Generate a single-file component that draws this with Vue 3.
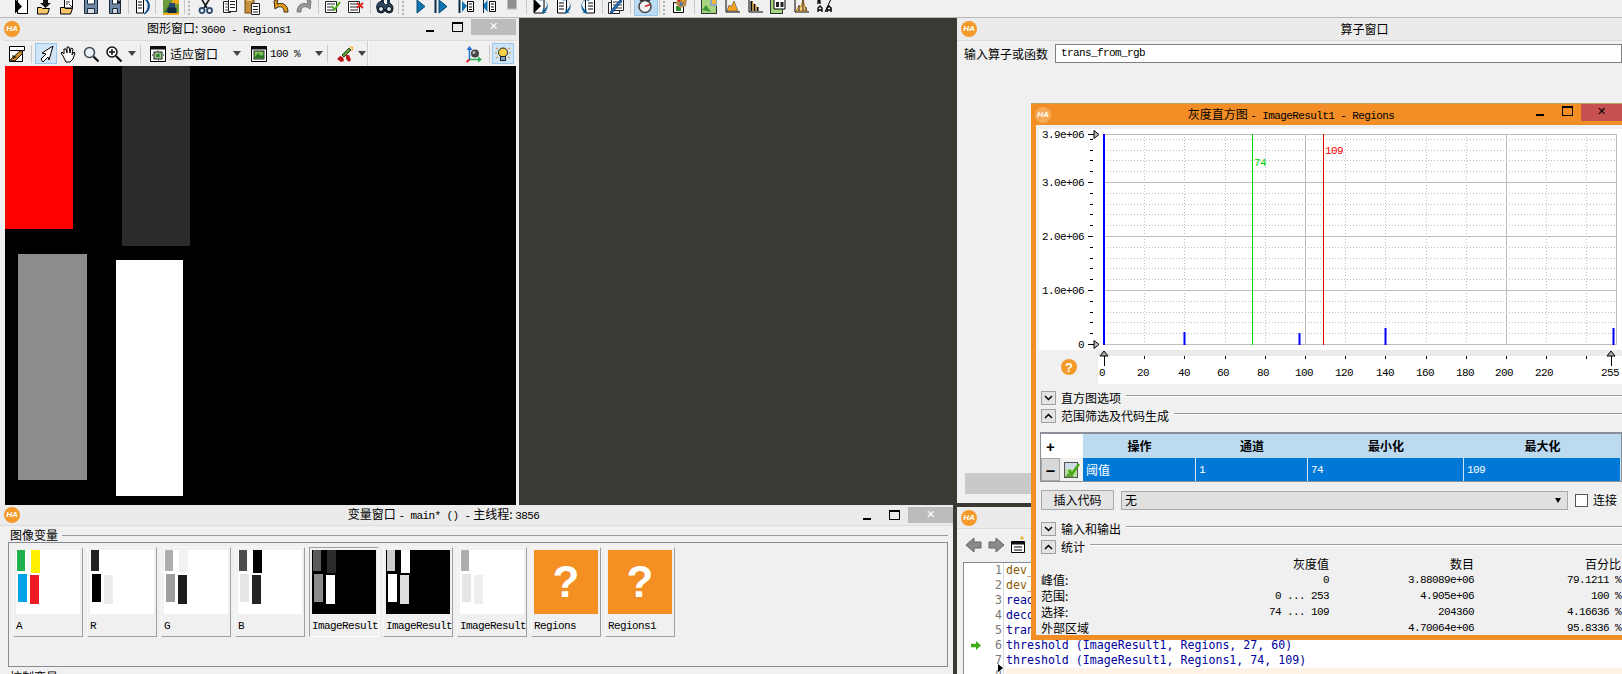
<script setup>
const icons = {
  doc: '<path d="M3.5 -1h10v14.500h-10z" fill="#fff" stroke="#000"/><path d="M1 -1l7 7.500-7 7z" fill="#000"/>',
  open: '<path d="M1.500 7.500h4l1 1h7l-2 5.500h-10z" fill="#f6c66c" stroke="#000"/><path d="M7 0h5v3h3l-5.500 5-5.500-5h3z" fill="#111"/>',
  openx: '<path d="M1.500 7.500h4l1 1h7l-2 5.500h-10z" fill="#f6c66c" stroke="#000"/><path d="M5.500 -1h8v9h-8z" fill="#fff" stroke="#000"/><path d="M7 2h4M7 4h2M10 4l3 3" stroke="#333"/>',
  save: '<path d="M1.500 -1h12l1 1v13.500h-13z" fill="#6f8aa8" stroke="#1c2a38"/><path d="M4.500 -1h7v5h-7z" fill="#fff" stroke="#1c2a38"/><path d="M4.500 8.500h7v5h-7z" fill="#d9dfe5" stroke="#1c2a38"/>',
  saveall: '<path d="M2.500 -1h11v14.500h-11z" fill="#6f8aa8" stroke="#1c2a38"/><path d="M5.500 -1h5v5h-5z" fill="#fff" stroke="#1c2a38"/><path d="M5.500 8.500h5v5h-5z" fill="#cfd6dd" stroke="#1c2a38"/><path d="M12 1v3M10.500 2.500h3" stroke="#000"/>',
  saveas: '<path d="M2.500 -1h7v14h-7z" fill="#fff" stroke="#000"/><path d="M4 2h4M4 5h4M4 8h4" stroke="#000"/><path d="M10 -1c5 2 6 10 0 15l2-1c5-4 4-11 0-14z" fill="#0d4f8c" stroke="#0d4f8c"/>',
  prog: '<rect x="0" y="-1" width="16" height="14" fill="#6f9a3c"/><rect x="9" y="-1" width="7" height="5" fill="#f0a81c"/><path d="M1 12l5-7 4 7z" fill="#2e6b3a"/><rect x="6" y="3" width="6" height="5" fill="#2a4a6a"/><path d="M5 13v-5h8v5zM7 13v2M11 13v2" fill="#10283c" stroke="#10283c"/><rect x="0" y="13" width="16" height="2" fill="#f0a81c"/>',
  cut: '<path d="M3 -2l6 10M12 -2l-6 10" stroke="#111" stroke-width="1.600" fill="none"/><circle cx="4" cy="10.500" r="2.500" fill="#fff" stroke="#2c4a6e" stroke-width="1.800"/><circle cx="11.500" cy="10.500" r="2.500" fill="#fff" stroke="#2c4a6e" stroke-width="1.800"/>',
  copy: '<path d="M1.500 1.500h7v11h-7z" fill="#fff" stroke="#222"/><path d="M6.500 -1.500h8v13h-8z" fill="#fff" stroke="#222"/><path d="M8 1.500h5M8 4.500h5M8 7.500h5" stroke="#222"/><path d="M3 4h3M3 7h3M3 10h3" stroke="#555"/>',
  paste: '<rect x="1" y="-1" width="9" height="14" fill="#c5913f" stroke="#6b4a17"/><rect x="3" y="-2" width="5" height="3" fill="#e9c88a"/><path d="M7.500 3.500h8v11h-8z" fill="#fff" stroke="#222"/><path d="M9 6.500h5M9 9.500h5M9 12h5" stroke="#222"/>',
  undo: '<path d="M1 1l1 8 3-2c4-1 6 1 6 5h4c0-7-5-10-11-8L5-1z" fill="#e59a1e" stroke="#3a2a10"/>',
  redo: '<path d="M15 1l-1 8-3-2c-4-1-6 1-6 5H1c0-7 5-10 11-8l-1-5z" fill="#999" stroke="#7a7a7a"/>',
  check: '<path d="M.500 1.500h11v11h-11z" fill="#fff" stroke="#222"/><path d="M2 4h8M2 7h6M2 10h8" stroke="#222"/><path d="M7 6l2.500 3.500L15 2" fill="none" stroke="#4aae1e" stroke-width="2"/>',
  xcheck: '<path d="M.500 1.500h11v11h-11z" fill="#fff" stroke="#222"/><path d="M2 4h8M2 7h8M2 10h8" stroke="#222"/><path d="M9 3l6 5M15 3L9 8" stroke="#e1261c" stroke-width="2"/>',
  binoc: '<path d="M4 -1h3v4H4zM10 -1h3v4h-3z" fill="#1f3550"/><path d="M0 9a4 5 0 0 1 8-4h1a4 5 0 0 1 7 4 4 4 0 0 1-8 0 4 4 0 0 1-8 0z" fill="#2c4866" stroke="#0c1a28"/><circle cx="4" cy="9" r="2.500" fill="#dfe7ef" stroke="#000"/><circle cx="12" cy="9" r="2.500" fill="#dfe7ef" stroke="#000"/>',
  play: '<path d="M1 0l8 6.500-8 6.500z" fill="#0d72b0" stroke="#0a4a70"/>',
  play2: '<path d="M1.500 -1v14" stroke="#0a2a48" stroke-width="2"/><path d="M5 0l8 6.500-8 6.500z" fill="#0d72b0" stroke="#0a4a70"/>',
  step: '<path d="M1.500 -1v14" stroke="#0a2a48" stroke-width="2"/><path d="M4 1l5 5-5 6z" fill="#0d72b0"/><path d="M9.500 1.500h6v10h-6z" fill="#fff" stroke="#000"/><path d="M11 4h3M11 7h3M11 9.500h3" stroke="#000"/>',
  stepb: '<path d="M.5 6l5-6v12z" fill="#0d72b0"/><path d="M7.500 1.500h6v10h-6z" fill="#fff" stroke="#000"/><path d="M9 4h3M9 7h3M9 9.500h3" stroke="#000"/><path d="M1.500 -1v14" stroke="#0a2a48"/>',
  stop: '<rect x=".5" y="-1" width="9" height="10" fill="#8f8f8f" stroke="#bcbcbc"/>',
  ret1: '<path d="M1 -1h10v14H1z" fill="#fff" stroke="#000"/><path d="M1 -1l7 7-7 7z" fill="#000"/><path d="M7 1c6-3 10 4 4 9l-1-2 -1 5h5l-2-1c6-6 1-15-6-11z" fill="#0d5f9c"/>',
  ret2: '<path d="M1.500 -1h9v14h-9z" fill="#fff" stroke="#000"/><path d="M3 3h5M3 6h5M3 9h5" stroke="#000"/><path d="M7 1c6-3 10 4 4 9l-1-2-1 5h5l-2-1c6-6 1-15-6-11z" fill="#0d5f9c"/>',
  ret3: '<path d="M5.500 -1h9v14h-9z" fill="#fff" stroke="#000"/><path d="M8 3h5M8 6h5M8 9h5" stroke="#000"/><path d="M9 1C3-2-1 5 5 10l1-2 1 5H2l2-1C-2 6 3-3 10-1z" fill="#0d5f9c"/>',
  edit: '<path d="M.5 2.500h11v11h-11z" fill="#fff" stroke="#222"/><path d="M3.500 -.5h12v11h-12z" fill="#fff" stroke="#222"/><path d="M5 2h9M5 5h9M5 8h9" stroke="#333"/><path d="M2 12L12 0l2 1L4 13z" fill="#2a73c7" stroke="#174a85"/>',
  clock: '<circle cx="8" cy="6.500" r="6" fill="#f3f3f3" stroke="#444" stroke-width="1.500"/><path d="M8 6.500l5-2" stroke="#d9261c" stroke-width="1.500"/><path d="M3 0l3 1M13 0l-3 1" stroke="#333" stroke-width="2"/>',
  pal: '<path d="M1.500 2.500h10v10h-10z" fill="#fff" stroke="#000"/><rect x="4" y="6" width="5" height="5" fill="#2f8f2f"/><path d="M3 3l5-5 7 1-1 7-6 2z" fill="#b38b4a"/><circle cx="7" cy="0" r="1.500" fill="#d82020"/><circle cx="11" cy="0" r="1.500" fill="#e8a814"/><circle cx="9" cy="4" r="1.500" fill="#2a6fc4"/>',
  img1: '<rect x=".5" y="-1" width="15" height="14.500" fill="#a5d57e" stroke="#333"/><path d="M9 -1h7v7h-7z" fill="#8fa8c4"/><rect x="11" y="0" width="4" height="4" fill="#f2b53a"/><path d="M1 10l4-5 5 7z" fill="#3c9a3a"/>',
  hist1: '<path d="M1 -1v13h14" fill="none" stroke="#000"/><path d="M2 11l2-6 2 2 3-6 2 5 2 5z" fill="#f7a11c" stroke="#333" stroke-width=".5"/>',
  hist2: '<path d="M1 -1v13h14" fill="none" stroke="#000"/><path d="M3.500 11V1M6.500 11V4M9.500 11V7" stroke="#000" stroke-width="2"/><path d="M5 11V2M8 11V5" stroke="#f7a11c" stroke-width="1"/>',
  img2: '<rect x=".5" y="-1" width="12" height="14.500" fill="#a5d57e" stroke="#333"/><path d="M4 -1h11v10h-11z" fill="#fff" stroke="#000"/><path d="M6 2h3v5h-3zM10.500 2h3v5h-3z" fill="#222"/>',
  hist3: '<path d="M1 -1v13h14" fill="none" stroke="#000"/><path d="M2 11l3-5 2 1 2-7 2 7 2 4z" fill="#f7cf7c" stroke="#c17c10"/><path d="M5 11V5M9 11V0M12 11V7" stroke="#222"/>',
  aa: '<path d="M1 4V1l1-2 1 2v3M1 2h2M1 12V8l2-2 2 2v4M1 10h4" stroke="#000" fill="none" stroke-width="1.300"/><path d="M8 12l6-13" stroke="#000"/><path d="M10 12V8l2-2 2 2v4M10 10h4" stroke="#000" fill="none" stroke-width="1.500"/>',
  pen: '<path d="M.5 .5h15v4h-15z" fill="#fff" stroke="#000"/><path d="M.5 4.500h13v11h-13z" fill="#fff" stroke="#000"/><path d="M1 14L11 5l3 2-8 8z" fill="#c88a2a" stroke="#2a1a06"/><path d="M3 9l5 2-4 2z" fill="#3a2a10"/>',
  arrow: '<path d="M15 0L4 7l4 1-5 5 2 3 5-5 1 3z" fill="#fff" stroke="#000"/>',
  hand: '<path d="M3 10L1 7l1-1 2 2 0-5 2 0 1 4 0-6 2 0 1 6 1-5 2 1-1 6 2-3 1 1-2 6-3 3H6z" fill="#fff" stroke="#000"/>',
  mag: '<circle cx="6.500" cy="6.500" r="5" fill="#eef3f8" stroke="#3c4a55" stroke-width="1.500"/><path d="M10.500 10.500l5 5" stroke="#111" stroke-width="2.200"/>',
  zoomp: '<circle cx="6" cy="6" r="5" fill="#fff" stroke="#111" stroke-width="1.500"/><path d="M3 6h6M6 3v6" stroke="#111" stroke-width="1.500"/><path d="M10 10l5.500 5.500" stroke="#111" stroke-width="2.200"/>',
  fit: '<path d="M.5 .5h15v15h-15z" fill="#fff" stroke="#000"/><path d="M.5 .5h15v3h-15z" fill="#111"/><rect x="4" y="6" width="8" height="7" fill="#9ac38a" stroke="#222"/><rect x="6.500" y="8" width="3" height="3" fill="#2a7a2a"/><path d="M2 9h1M13 9h1M8 4.500v1M8 14h1" stroke="#000"/>',
  fitimg: '<path d="M.5 .5h15v15h-15z" fill="#fff" stroke="#000"/><path d="M.5 .5h15v3h-15z" fill="#111"/><rect x="3" y="5" width="10" height="8" fill="#7fc455" stroke="#222"/><path d="M3 12l4-5 3 3 3-2v4z" fill="#2a7a2a"/>',
  color: '<path d="M5 9L12 2l2 2-7 7z" fill="#5d9a3a" stroke="#2d4a1a"/><path d="M13 0l1 2 2-1-1 2 1 1-2 0" stroke="#f0a81c" fill="none"/><path d="M0 13l3-3 3 1 1 4-3 1zM9 9l3 0 2 5-2 2-3-3z" fill="#c01818"/>',
  axes: '<path d="M3.500 14V2" stroke="#1a6fd4" stroke-width="1.500"/><path d="M3.500 0l3 4h-6z" fill="#1a6fd4"/><path d="M3.500 13.500H14" stroke="#27b04a" stroke-width="1.500"/><path d="M16 13.500l-4-3v6z" fill="#27b04a"/><path d="M3.500 13.500L.5 16" stroke="#e02020" stroke-width="2"/><circle cx="9" cy="7.500" r="4" fill="#444"/><circle cx="8" cy="6.500" r="1.500" fill="#bbb"/>',
  bulb: '<circle cx="8" cy="6.500" r="4.500" fill="#f9d24a" stroke="#222"/><rect x="5.500" y="10.500" width="5" height="4" fill="#7fa6c8" stroke="#222"/><path d="M8 -1v1M1 2l2 1M15 2l-2 1M0 7h2M14 7h2M1 12l2-1M15 12l-2-1" stroke="#d48a10"/>'
}
const topRow = [
  ['doc', 14], ['open', 36], ['openx', 59], ['save', 83], ['saveall', 107], ['saveas', 134], ['prog', 163],
  ['cut', 198], ['copy', 222], ['paste', 244], ['undo', 273], ['redo', 296], ['check', 325], ['xcheck', 348],
  ['binoc', 377], ['play', 416], ['play2', 434], ['step', 458], ['stepb', 482], ['stop', 507],
  ['ret1', 533], ['ret2', 556], ['ret3', 580], ['edit', 608], ['clock', 637], ['pal', 672], ['img1', 701],
  ['hist1', 725], ['hist2', 748], ['img2', 770], ['hist3', 794], ['aa', 817]
]
let prev = 0
const top = topRow.map(([k, x]) => { const o = { k, ml: x - prev }; prev = x + 16; return o })
const seps = [128, 155, 184, 318, 370, 398, 526, 602, 630, 659, 694]
const handles = [188, 402, 663]

const rects = [[1, 0, 8, 21], [15, 0, 9, 23], [2, 24, 9, 28], [14, 25, 9, 29]]
const thumbs = [
  { n: 'A', bg: '#fff', c: ['#22b14c', '#fff200', '#00a2e8', '#ed1c24'] },
  { n: 'R', bg: '#fff', c: ['#222', '#fff', '#000', '#ececec'] },
  { n: 'G', bg: '#fff', c: ['#aeaeae', '#f2f2f2', '#9f9f9f', '#1d1d1d'] },
  { n: 'B', bg: '#fff', c: ['#4d4d4d', '#000', '#e6e6e6', '#242424'] },
  { n: 'ImageResult1', bg: '#000', sel: true, c: ['#5a5a5a', '#2a2a2a', '#8c8c8c', '#fff'] },
  { n: 'ImageResult1', bg: '#000', c: ['#ccc', '#fff', '#fff', '#ddd'] },
  { n: 'ImageResult1', bg: '#fff', c: ['#aeaeae', '#fff', '#e6e6e6', '#eee'] },
  { n: 'Regions', q: true },
  { n: 'Regions1', q: true }
]

const X = (v) => Math.round(1104 + 2.01 * v) + 0.5
const vDots = [20, 40, 60, 80, 120, 140, 160, 180, 220, 240].map(X)
const vSolid = [100, 200].map(X)
const hSolid = [182.5, 236.5, 290.5]
const hDots = []
for (let i = 1; i < 20; i++) {
  if (i % 5 !== 0) hDots.push(Math.round(344 - 10.8 * i) + 0.5)
}
const yLabels = [['3.9e+06', 138], ['3.0e+06', 186], ['2.0e+06', 240], ['1.0e+06', 294], ['0', 348]]
const bars = [[40, 332], [97, 333], [140, 328], [253, 328]].map(([v, y]) => ({ x: X(v), y }))
const xLabels = [[0, 1102], [20, 1143], [40, 1184], [60, 1223], [80, 1263], [100, 1304], [120, 1344], [140, 1385], [160, 1425], [180, 1465], [200, 1504], [220, 1544], [255, 1610]]
const xTicks = [20, 40, 60, 80, 100, 120, 140, 160, 180, 200, 220, 240].map(X)
const stats = [
  ['峰值:', '0', '3.88089e+06', '79.1211 %'],
  ['范围:', '0 ... 253', '4.905e+06', '100 %'],
  ['选择:', '74 ... 109', '204360', '4.16636 %'],
  ['外部区域', '', '4.70064e+06', '95.8336 %']
]
const code = [
  ['1', 'dev_', 'b'], ['2', 'dev_', 'b'], ['3', 'read', 'c'], ['4', 'deco', 'c'], ['5', 'tran', 'c'],
  ['6', 'threshold (ImageResult1, Regions, 27, 60)', 'c'],
  ['7', 'threshold (ImageResult1, Regions1, 74, 109)', 'c'],
  ['8', '', 'cur']
]
</script>

<template>
  <div class="screen">
    <header class="toolbar">
      <span v-for="s in seps" :key="s" class="tsep" :style="{ left: s + 'px' }"></span>
      <span v-for="h in handles" :key="h" class="thandle" :style="{ left: h + 'px' }"></span>
      <span class="active-box"></span>
      <svg v-for="(t, i) in top" :key="i" class="ico" :style="{ marginLeft: t.ml + 'px' }" viewBox="0 0 16 16" width="16" height="16" v-html="icons[t.k]"></svg>
    </header>

    <!-- 图形窗口 -->
    <section class="win gfx">
      <div class="title">
        <span class="ha">HA</span>
        <span class="ttext gfx-t">图形窗口: <span class="m">3600 - Regions1</span></span>
        <span class="wmin"></span><span class="wmax"></span><span class="wclose">✕</span>
      </div>
      <div class="gfx-tools">
        <svg class="gi g1" viewBox="0 0 16 16" width="16" height="16" v-html="icons.pen"></svg>
        <span class="vsep s1"></span>
        <span class="on"><svg viewBox="0 0 16 16" width="16" height="16" v-html="icons.arrow"></svg></span>
        <svg class="gi g3" viewBox="0 0 16 16" width="16" height="16" v-html="icons.hand"></svg>
        <svg class="gi g4" viewBox="0 0 16 16" width="16" height="16" v-html="icons.mag"></svg>
        <svg class="gi g4" viewBox="0 0 16 16" width="16" height="16" v-html="icons.zoomp"></svg>
        <span class="drop d1"></span>
        <span class="vsep s2"></span>
        <svg class="gi g5" viewBox="0 0 16 16" width="16" height="16" v-html="icons.fit"></svg>
        <span class="tl t1">适应窗口</span>
        <span class="drop d2"></span>
        <svg class="gi g6" viewBox="0 0 16 16" width="16" height="16" v-html="icons.fitimg"></svg>
        <span class="tl t2 m">100 %</span>
        <span class="drop d3"></span>
        <span class="vsep s3"></span>
        <svg class="gi g7" viewBox="0 0 16 16" width="16" height="16" v-html="icons.color"></svg>
        <span class="drop d4"></span>
        <span class="vline"></span>
        <svg class="gi g8" viewBox="0 0 16 16" width="16" height="16" v-html="icons.axes"></svg>
        <span class="vsep s4"></span>
        <span class="on on2"><svg viewBox="0 0 16 16" width="16" height="16" v-html="icons.bulb"></svg></span>
      </div>
      <svg class="canvas" width="511" height="439" viewBox="5 66 511 439">
        <rect x="5" y="66" width="511" height="439" fill="#000" />
        <rect x="5" y="66" width="68" height="163" fill="#f00" />
        <rect x="122" y="66" width="68" height="180" fill="#2a2a2a" />
        <rect x="18" y="254" width="69" height="226" fill="#8c8c8c" />
        <rect x="116" y="260" width="67" height="236" fill="#fff" />
      </svg>
    </section>

    <!-- 变量窗口 -->
    <section class="win vars">
      <div class="title">
        <span class="ha">HA</span>
        <span class="ttext vars-t">变量窗口 <span class="m">- main* () -</span> 主线程: <span class="m">3856</span></span>
        <span class="wmin"></span><span class="wmax"></span><span class="wclose">✕</span>
      </div>
      <div class="group-head"><span>图像变量</span><i></i></div>
      <div class="group">
        <div v-for="(t, i) in thumbs" :key="i" class="thumb" :class="{ sel: t.sel }">
          <div v-if="t.q" class="pic q">?</div>
          <div v-else class="pic" :style="{ background: t.bg }">
            <span v-for="(r, j) in rects" :key="j" class="bar" :style="{ left: r[0] + 'px', top: r[1] + 'px', width: r[2] + 'px', height: r[3] + 'px', background: t.c[j] }"></span>
          </div>
          <div class="tname m">{{ t.n }}</div>
        </div>
      </div>
      <div class="cut-label">控制变量</div>
    </section>

    <!-- 算子窗口 -->
    <section class="win oper">
      <div class="title">
        <span class="ha">HA</span>
        <span class="ttext oper-t">算子窗口</span>
      </div>
      <div class="oper-row">
        <span>输入算子或函数</span>
        <div class="oper-input m">trans_from_rgb</div>
      </div>
      <div class="oper-gap"></div>
      <div class="oper-bar"></div>
    </section>

    <!-- 程序窗口 -->
    <section class="win prog">
      <div class="title">
        <span class="ha">HA</span>
      </div>
      <div class="prog-tools">
        <svg viewBox="0 0 18 18" width="18" height="18"><path d="M1 9l8-7v4h7v6H9v4z" fill="#8a8a8a" stroke="#666" /></svg>
        <svg viewBox="0 0 18 18" width="18" height="18"><path d="M17 9l-8-7v4H2v6h7v4z" fill="#8a8a8a" stroke="#666" /></svg>
        <svg viewBox="0 0 18 18" width="18" height="18"><path d="M2.500 5.500h13v11h-13z" fill="#fff" stroke="#000" /><path d="M2.500 5.500h13v3h-13z" fill="#111" /><path d="M5 11h8M5 14h8" stroke="#000" /><path d="M13 0v4M11 2h4" stroke="#e8a814" /></svg>
      </div>
      <div class="code">
        <div v-for="c in code" :key="c[0]" class="cline" :class="c[2]">
          <span class="mark"><i v-if="c[0] === '6'" class="pc"></i></span>
          <span class="num">{{ c[0] }}</span>
          <span class="src">{{ c[1] }}</span>
        </div>
        <i class="caret"></i>
      </div>
    </section>

    <!-- 灰度直方图 -->
    <section class="win hist">
      <div class="title horange">
        <span class="ha">HA</span>
        <span class="ttext hist-t">灰度直方图 <span class="m">- ImageResult1 - Regions</span></span>
        <span class="wmin"></span><span class="wmax"></span><span class="wclose red">✕</span>
      </div>
      <div class="hbody">
        <svg class="plot" width="586" height="259" viewBox="1036 125 586 259">
          <rect x="1036" y="125" width="586" height="259" fill="#f0f0f0" />
          <rect x="1039" y="129" width="583" height="221" fill="#fff" />
          <rect x="1098" y="356" width="524" height="28" fill="#fff" />
          <g fill="none" stroke="#bdbdbd">
            <line v-for="y in hDots" :key="'d' + y" x1="1104" x2="1616" :y1="y" :y2="y" stroke-dasharray="1 2" />
            <line v-for="x in vDots" :key="'v' + x" y1="134" y2="344" :x1="x" :x2="x" stroke-dasharray="1 2" />
            <line v-for="y in hSolid" :key="'s' + y" x1="1104" x2="1616" :y1="y" :y2="y" />
            <line v-for="x in vSolid" :key="'t' + x" y1="134" y2="344" :x1="x" :x2="x" />
            <path d="M1104.500 134.500H1616.500V344.500H1104.500z" />
          </g>
          <line x1="1252.500" x2="1252.500" y1="134" y2="345" stroke="#00e000" />
          <line x1="1323.500" x2="1323.500" y1="134" y2="345" stroke="#e00000" />
          <rect x="1103" y="134" width="2" height="211" fill="#0000ff" />
          <rect v-for="b in bars" :key="b.x" :x="b.x - 1" :y="b.y" width="2" :height="345 - b.y" fill="#0000ff" />
          <text class="m" x="1254" y="166" fill="#00d800">74</text>
          <text class="m" x="1325" y="154" fill="#f00">109</text>
          <text v-for="l in yLabels" :key="l[0]" class="m" x="1084" :y="l[1]" text-anchor="end" fill="#000">{{ l[0] }}</text>
          <g stroke="#000">
            <path d="M1088 134.500h6M1088 344.500h6M1088 182.500h5M1088 236.500h5M1088 290.500h5" />
            <path v-for="y in hDots" :key="'k' + y" :d="`M1090 ${y}h3`" />
          </g>
          <path d="M1094 130.500l5 4-5 4zM1094 340.500l5 4-5 4z" fill="#bbb" stroke="#000" />
          <rect x="1098" y="350" width="524" height="6" fill="#eaeaea" />
          <path d="M1104 351l4 5h-8zM1611 351l4 5h-8z" fill="#aaa" stroke="#000" />
          <path d="M1104.500 356v10M1611.500 356v10" stroke="#000" />
          <path v-for="x in xTicks" :key="'x' + x" :d="`M${x} 356v3`" stroke="#000" />
          <text v-for="l in xLabels" :key="l[0]" class="m" :x="l[1]" y="376" text-anchor="middle" fill="#000">{{ l[0] }}</text>
          <circle cx="1069" cy="367" r="8" fill="#f39a2b" />
          <text class="qm" x="1069" y="372" text-anchor="middle" fill="#fff">?</text>
        </svg>

        <div class="sec first"><span class="tog"><svg width="9" height="6" viewBox="0 0 9 6"><path d="M1 1l3.500 3.500L8 1" fill="none" stroke="#000" stroke-width="1.500" /></svg></span><span>直方图选项</span><i></i></div>
        <div class="sec"><span class="tog"><svg width="9" height="6" viewBox="0 0 9 6"><path d="M1 5l3.500-3.500L8 5" fill="none" stroke="#000" stroke-width="1.500" /></svg></span><span>范围筛选及代码生成</span><i></i></div>

        <div class="rtable">
          <div class="cell c-plus">+</div>
          <div class="cell c-blank"></div>
          <div class="cell hd">操作</div>
          <div class="cell hd">通道</div>
          <div class="cell hd">最小化</div>
          <div class="cell hd">最大化</div>
          <div class="cell c-minus"><b>−</b></div>
          <div class="cell c-ic"><svg viewBox="0 0 16 16" width="16" height="16"><rect x=".5" y=".5" width="13" height="15" fill="#b7dca0" stroke="#555" /><path d="M1 1h12v6H1z" fill="#cfdcea" /><path d="M1 15l4-5 5 5z" fill="#5da83a" /><path d="M5 8l3 4L15 2" fill="none" stroke="#49a80f" stroke-width="2.500" /></svg></div>
          <div class="cell rw">阈值</div>
          <div class="cell rw m">1</div>
          <div class="cell rw m">74</div>
          <div class="cell rw m">109</div>
        </div>

        <div class="ins">
          <button class="btn">插入代码</button>
          <div class="combo"><span>无</span><i></i></div>
          <span class="chk"></span><span>连接</span>
        </div>

        <div class="sec s-io"><span class="tog"><svg width="9" height="6" viewBox="0 0 9 6"><path d="M1 1l3.500 3.500L8 1" fill="none" stroke="#000" stroke-width="1.500" /></svg></span><span>输入和输出</span><i></i></div>
        <div class="sec s-st"><span class="tog"><svg width="9" height="6" viewBox="0 0 9 6"><path d="M1 5l3.500-3.500L8 5" fill="none" stroke="#000" stroke-width="1.500" /></svg></span><span>统计</span><i></i></div>

        <div class="stats">
          <div></div><div class="r">灰度值</div><div class="r">数目</div><div class="r">百分比</div>
          <template v-for="s in stats" :key="s[0]">
            <div>{{ s[0] }}</div><div class="r m">{{ s[1] }}</div><div class="r m">{{ s[2] }}</div><div class="r m">{{ s[3] }}</div>
          </template>
        </div>
      </div>
    </section>
  </div>
</template>

<style>
html, body { margin: 0; background: #3a3934; overflow: hidden; }
</style>

<style scoped>
.screen {
  position: relative;
  width: 1622px;
  height: 674px;
  overflow: hidden;
  background: #3a3934;
  font: 12px/16px "Noto Sans CJK SC", "Liberation Sans", sans-serif;
  color: #000;
}
.m {
  font-family: "Liberation Mono", "Noto Sans CJK SC", monospace;
  font-size: 11px;
  letter-spacing: -0.6px;
}
.toolbar {
  position: relative;
  height: 17px;
  background: #f0f0f0;
  border-bottom: 1px solid #b9b9b9;
  display: flex;
  align-items: flex-end;
  overflow: hidden;
}
.ico { flex: none; overflow: visible; position: relative; top: -1px; }
.tsep { position: absolute; top: 0; height: 14px; width: 1px; background: #c8c8c8; }
.thandle {
  position: absolute; top: 1px; height: 14px; width: 2px;
  background: repeating-linear-gradient(#b4b4b4 0 2px, transparent 2px 4px);
}
.active-box { position: absolute; left: 634px; top: 0; width: 22px; height: 15px; background: #bcdcf4; border: 1px solid #99c8ec; border-top: 0; }

.win { position: absolute; background: #f0f0f0; }
.title {
  height: 22px;
  background: #ebebeb;
  display: flex;
  align-items: center;
  padding-left: 4px;
  position: relative;
}
.ha {
  width: 16px; height: 16px; border-radius: 50%;
  background: #f39a2b; color: #fff;
  font: italic bold 8px/16px "Liberation Sans", sans-serif;
  text-align: center; flex: none;
}
.ttext { flex: 1; text-align: center; white-space: nowrap; }
.wmin { width: 8px; height: 2px; background: #000; align-self: flex-start; margin-top: 12px; }
.wmax { width: 9px; height: 7px; border: 1px solid #000; border-top-width: 2px; align-self: flex-start; margin: 4px 0 0 18px; }
.wclose {
  width: 45px; height: 16px; background: #bcbcbc; color: #fff; text-align: center;
  align-self: flex-start; margin: 1px 0 0 8px; font: bold 11px/15px "DejaVu Sans", sans-serif;
}

.gfx { left: 0; top: 18px; width: 519px; height: 487px; }
.gfx .wclose { margin-right: 3px; }
.gfx-t { padding-right: 8px; }
.gfx-tools {
  height: 25px; display: flex; align-items: center; margin: 0 3px 0 4px; border-top: 1px solid #dcdcdc; background: #f0f0f0;
}
.gi { flex: none; overflow: visible; }
.g1 { margin-left: 5px; }
.on { width: 22px; height: 21px; display: flex; align-items: center; justify-content: center; background: #cfe5f7; border: 1px solid #99c8ec; flex: none; box-sizing: border-box; }
.vsep { width: 1px; height: 18px; background: #c9c9c9; flex: none; }
.s1 { margin: 0 3px 0 6px; }
.g3 { margin-left: 3px; }
.g4 { margin-left: 7px; }
.drop { width: 0; height: 0; border: 4px solid transparent; border-top: 5px solid #444; border-bottom: 0; flex: none; }
.d1 { margin-left: 6px; }
.s2 { margin-left: 4px; }
.g5 { margin-left: 9px; }
.tl { white-space: nowrap; }
.t1 { margin-left: 4px; width: 48px; }
.d2 { margin-left: 15px; }
.g6 { margin-left: 10px; }
.t2 { margin-left: 3px; width: 30px; }
.d3 { margin-left: 15px; }
.s3 { margin-left: 4px; }
.g7 { margin-left: 9px; }
.d4 { margin-left: 5px; }
.vline { width: 2px; height: 25px; background: #fafafa; border-left: 1px solid #cfcfcf; margin-left: 1px; flex: none; box-sizing: border-box; }
.g8 { margin-left: 97px; }
.s4 { margin-left: 7px; }
.on2 { margin-left: 2px; }
.canvas { display: block; margin: 0 0 0 5px; }

.vars { left: 0; top: 505px; width: 953px; height: 169px; }
.vars .title { height: 20px; border-bottom: 1px solid #dcdcdc; }
.vars .wclose { margin: 2px 0 0 8px; }
.vars .wmin { margin-top: 13px; }
.vars .wmax { margin-top: 5px; }
.vars-t { padding-left: 4px; }
.group-head { display: flex; align-items: center; margin: 2px 5px 0 10px; height: 14px; }
.group-head i { flex: 1; height: 1px; background: #9a9aa4; margin-left: 4px; }
.group {
  margin: 0 5px 0 8px; height: 125px; border: 1px solid #8a8a96; display: flex; gap: 4px; padding: 4px 0 0 4px; box-sizing: border-box; align-items: flex-start;
}
.thumb {
  width: 70px; height: 90px; box-sizing: border-box; flex: none;
  border: 1px solid #f8f8f8; border-right: 1px solid #a0a0a0; border-bottom: 1px solid #a0a0a0;
  padding: 2px 2px 0; background: #f0f0f0;
}
.thumb.sel { border: 1px solid #a0a0a0; border-right-color: #fff; border-bottom-color: #fff; }
.pic { position: relative; width: 64px; height: 64px; overflow: hidden; }
.bar { position: absolute; }
.q { background: #f38f23; color: #fff; font: bold 44px/64px "Liberation Sans", sans-serif; text-align: center; }
.tname { margin-top: 5px; line-height: 14px; overflow: hidden; white-space: nowrap; width: 66px; }
.cut-label { margin: 2px 0 0 10px; }

.oper { left: 957px; top: 18px; width: 665px; height: 485px; }
.oper .title { height: 22px; border-bottom: 1px solid #dcdcdc; }
.oper-t { position: relative; left: 65px; }
.oper-row { display: flex; align-items: center; padding: 3px 0 0 7px; gap: 7px; }
.oper-input { flex: 1; height: 19px; box-sizing: border-box; border: 1px solid #7f7f7f; background: #fff; padding-left: 5px; line-height: 17px; }
.oper-gap { height: 410px; }
.oper-bar { margin-left: 8px; height: 21px; background: #c9c9c9; }

.prog { left: 957px; top: 507px; width: 665px; height: 167px; }
.prog .title { height: 21px; border-bottom: 1px solid #dcdcdc; }
.prog-tools { display: flex; gap: 4px; padding: 7px 0 0 8px; height: 33px; box-sizing: border-box; }
.code { position: relative; margin-left: 6px; height: 112px; background: #fff; border: 1px solid #8a8a96; border-right: 0; border-bottom: 0; box-sizing: border-box; overflow: hidden; }
.cline { display: flex; height: 15px; align-items: center; font: 11.6px/15px "DejaVu Sans Mono", monospace; }
.mark { width: 17px; display: flex; justify-content: flex-end; }
.pc { width: 10px; height: 9px; background: #3fae16; clip-path: polygon(0 30%, 50% 30%, 50% 0, 100% 50%, 50% 100%, 50% 70%, 0 70%); }
.num { width: 23px; text-align: right; color: #777; padding-right: 1px; border-right: 1px solid #d8d8d8; margin-right: 2px; box-sizing: border-box; }
.src { white-space: pre; flex: 1; }
.b { color: #8a5a00; }
.c { color: #00009c; }
.cur .src { background: #fff3e8; align-self: stretch; }
.caret { position: absolute; left: 34px; top: 101px; width: 0; height: 0; border: 4px solid transparent; border-left: 5px solid #000; border-right: 0; }

.hist { left: 1031px; top: 103px; width: 600px; height: 537px; background: #f28e25; border-top: 1px solid #b8a35c; box-sizing: border-box; }
.horange { background: #f28e25; height: 21px; }
.horange .ha { background: #f6ab56; }
.horange .wmin { margin-top: 10px; }
.horange .wmax { margin-top: 2px; border-color: #000; }
.hist-t { padding-right: 5px; }
.wclose.red { background: #c75050; color: #000; margin: 0 9px 0 8px; width: 41px; height: 17px; }
.hbody {
  position: absolute; left: 5px; top: 21px; width: 595px; height: 510px; background: #f0f0f0; overflow: hidden;
}
.plot { display: block; }
.sec { display: flex; align-items: center; height: 14px; margin: 4px 0 0 5px; gap: 5px; }
.sec i { flex: 1; height: 2px; background: linear-gradient(#9a9a9a 50%, #fff 50%); margin-top: -4px; }
.first { margin-top: 7px; }
.tog { width: 15px; height: 14px; box-sizing: border-box; border: 1px solid #a0a0a0; background: #e4e4e4; display: flex; align-items: center; justify-content: center; flex: none; }
.rtable {
  margin: 9px 0 0 4px; width: 582px; height: 50px; box-sizing: border-box; border: 1px solid #8a8f9a; border-width: 2px 1px;
  display: grid; grid-template-columns: 19px 23px 113px 112px 156px 1fr; grid-template-rows: 24px 23px; background: #fff;
}
.cell { display: flex; align-items: center; }
.hd { background: #bcdaf0; font-weight: 700; justify-content: center; }
.c-plus { font: bold 15px/1 "Liberation Sans", sans-serif; justify-content: center; }
.c-minus { background: #d8d8d8; border: 1px solid #a8a8a8; justify-content: center; font-size: 16px; box-sizing: border-box; }
.c-ic { justify-content: center; background: #f2f2f2; }
.rw { background: #0078d7; color: #fff; padding-left: 3px; border-right: 1px solid #cfe6f7; box-sizing: border-box; }
.ins { display: flex; align-items: center; margin: 8px 0 0 5px; height: 20px; }
.btn { width: 73px; height: 20px; border: 1px solid #a9a9a9; background: #e4e4e4; font: inherit; padding: 0; }
.combo { width: 447px; height: 19px; box-sizing: border-box; border: 1px solid #a9a9a9; background: #e0e0e0; margin: 0 7px; display: flex; align-items: center; justify-content: space-between; padding: 0 6px 0 3px; }
.combo i { width: 0; height: 0; border: 3.500px solid transparent; border-top: 5px solid #000; border-bottom: 0; }
.chk { width: 13px; height: 13px; border: 1px solid #555; box-sizing: border-box; background: #fff; margin-right: 5px; }
.s-io { margin-top: 12px; }
.stats {
  display: grid; grid-template-columns: 100px 188px 145px 147px; grid-auto-rows: 16px; margin: 2px 0 0 5px; width: 580px;
}
.r { text-align: right; white-space: pre; }
.qm { font: bold 13px "Liberation Sans", sans-serif; }
</style>
